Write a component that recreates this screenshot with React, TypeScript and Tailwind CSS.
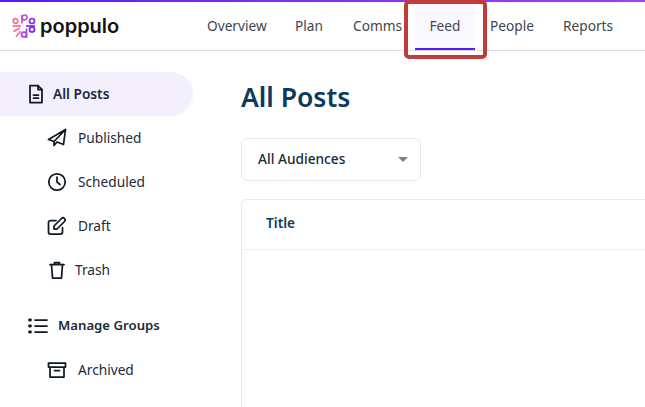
import type { ReactNode } from "react";

const ink = "#1b2a3a";

function Svg({ children, className }: { children: ReactNode; className?: string }) {
  return (
    <svg viewBox="0 0 20 20" fill="none" stroke="#101a26" strokeWidth="1.75" strokeLinejoin="round" strokeLinecap="round" className={className} aria-hidden="true">
      {children}
    </svg>
  );
}

function Logo() {
  return (
    <svg width="26" height="25" viewBox="0 0 26 25" fill="none" strokeWidth="1.7" aria-hidden="true">
      <circle cx="4.500" cy="7" r="2.300" stroke="#f0709a" />
      <path d="M11 1v8.500" stroke="#c84be0" />
      <circle cx="13.500" cy="3.500" r="2.500" stroke="#c84be0" />
      <circle cx="21" cy="7" r="2.500" stroke="#8a2ef2" />
      <path d="M15 12h9" stroke="#7a2cf5" />
      <circle cx="21" cy="15.500" r="2.500" stroke="#6a22f5" />
      <path d="M1.500 12h8.500" stroke="#f2708c" />
      <path d="M2.500 17.500 9 14M5 22.500l5-5.500" stroke="#ee6fa0" />
      <path d="M15.500 14.500v9.500" stroke="#b23dea" />
      <circle cx="13" cy="20.500" r="2.500" stroke="#b23dea" />
    </svg>
  );
}

function SubItem({ icon, label, gap }: { icon: ReactNode; label: string; gap?: string }) {
  return (
    <div className="flex h-11 items-center pl-[47px] text-[13.7px]" style={{ color: ink }}>
      <span className="flex w-[20px] justify-center">{icon}</span>
      <span className={gap ?? "ml-[11px]"}>{label}</span>
    </div>
  );
}

export default function App() {
  return (
    <div className="relative h-[407px] w-[645px] overflow-hidden bg-white font-['Noto_Sans',sans-serif]">
      <div className="h-[2px] bg-gradient-to-r from-[#5b16f5] to-[#a63cf0]" />
      <header className="flex h-[49px] items-center border-b border-[#dcdcdc]">
        <div className="flex w-[207px] items-center pl-[11px]">
          <Logo />
          <span className="ml-[3px] font-['Inter',sans-serif] text-[20px] font-semibold leading-none text-[#141414]">poppulo</span>
        </div>
        <nav className="flex items-center text-[13.7px] text-[#3f4650]">
          <span className="w-[59px]">Overview</span>
          <span className="ml-[29px] w-[28px]">Plan</span>
          <span className="ml-[30px] w-[47px]">Comms</span>
          <span className="ml-[15px] flex h-[48px] w-[60px] items-center justify-center border-b-2 border-[#5b16f5] bg-[#faf8ff] pt-[2px]">Feed</span>
          <span className="ml-[15px] w-[44px]">People</span>
          <span className="ml-[29px]">Reports</span>
        </nav>
      </header>

      <div className="flex">
        <aside className="w-[193px] shrink-0 pt-[21px]">
          <div className="flex h-11 items-center rounded-r-[22px] bg-[#f3effc] pl-[26px] text-[13.7px] font-semibold" style={{ color: ink }}>
            <Svg className="h-[20px] w-[20px]">
              <path d="M4 1.500h8l4 4v13H4z" />
              <path d="M12 1.500v4h4M7.500 11h5M7.500 14h5" />
            </Svg>
            <span className="ml-[7px]">All Posts</span>
          </div>
          <SubItem
            label="Published"
            icon={
              <Svg className="h-[20px] w-[20px]">
                <path d="M18.500 1.500 1.500 11.500l5.500 2L18.500 1.500Zm0 0-2 15-6.500-2.500-3 3.500V13.500" />
              </Svg>
            }
          />
          <SubItem
            label="Scheduled"
            icon={
              <Svg className="h-[20px] w-[20px]">
                <circle cx="10" cy="10" r="8.200" />
                <path d="M10 5v5l3 2.500" />
              </Svg>
            }
          />
          <SubItem
            label="Draft"
            icon={
              <Svg className="h-[20px] w-[20px]">
                <path d="M15.500 11.500V16a2 2 0 0 1-2 2H3.500a2 2 0 0 1-2-2V6.500a2 2 0 0 1 2-2H9" />
                <path d="M7 13v-3l7.500-7.500a1.500 1.500 0 0 1 3 3L10 13z" />
              </Svg>
            }
          />
          <SubItem
            label="Trash"
            gap="ml-[8px]"
            icon={
              <Svg className="h-[20px] w-[20px]">
                <path d="M3 4.500h14M4.500 4.500 5.500 18h9l1-13.500M7.500 4.500V2.500h5v2" />
              </Svg>
            }
          />
          <div className="mt-[12px] flex h-11 items-center pl-[28px] text-[13.2px] font-semibold" style={{ color: ink }}>
            <Svg className="h-[20px] w-[20px]">
              <path d="M7 4h12M7 10h12M7 16h12" />
              <path d="M1.500 4h1M1.500 10h1M1.500 16h1" strokeWidth="2.800" />
            </Svg>
            <span className="ml-[10px]">Manage Groups</span>
          </div>
          <SubItem
            label="Archived"
            icon={
              <Svg className="h-[20px] w-[20px]">
                <path d="M1.500 3h17v4h-17zM3 7v10h14V7M7.500 10.500h5" />
              </Svg>
            }
          />
        </aside>

        <main className="ml-[48px] flex-1 pt-[27px]">
          <h1 className="text-[26.500px] font-semibold leading-[38px] text-[#0b3b5e]">All Posts</h1>
          <div className="mt-[22px] flex h-[43px] w-[180px] items-center justify-between rounded-md border border-[#e8e8e8] pl-4 pr-[12px] text-[13.7px] font-medium" style={{ color: ink }}>
            <span>All Audiences</span>
            <span className="h-0 w-0 border-x-[5px] border-t-[5px] border-x-transparent border-t-[#808080]" />
          </div>
          <section className="mt-[18px] h-[220px] w-[420px] rounded-tl-md border-l border-t border-[#e8e8e8]">
            <div className="flex h-[50px] items-center border-b border-[#f0f0f0] pb-[2px] pl-6 text-[13.7px] font-semibold text-[#0b3b5e]">Title</div>
          </section>
        </main>
      </div>

      <div className="absolute left-[404px] top-0 h-[59px] w-[83px] rounded-[5px] border-4 border-[#c23a3a]" />
    </div>
  );
}
